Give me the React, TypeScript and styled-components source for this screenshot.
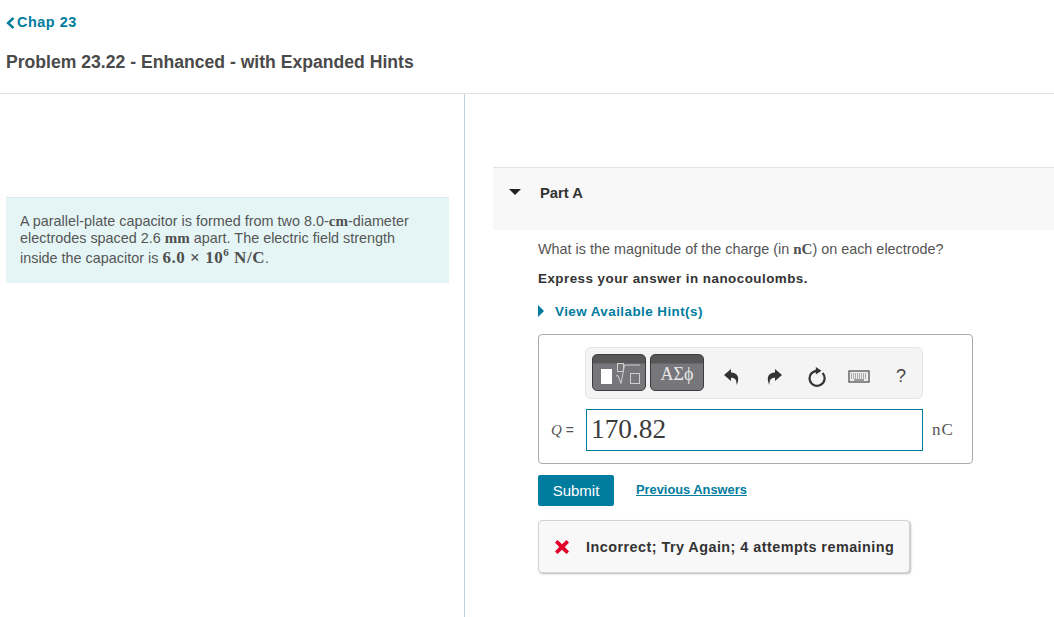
import React from 'react';
import styled, { createGlobalStyle } from 'styled-components';

const GlobalStyle = createGlobalStyle`
  html, body {
    margin: 0;
    padding: 0;
    background: #fff;
    height: 100%;
    overflow: hidden;
  }
  body {
    font-family: "Liberation Sans", Arial, sans-serif;
    color: #4a4a4a;
  }
`;

const Page = styled.div`
  width: 1054px;
  height: 617px;
  display: flex;
  flex-direction: column;
`;

const Header = styled.header`
  height: 94px;
  box-sizing: border-box;
  border-bottom: 1px solid #dfe3e6;
  padding: 14px 0 0 6px;
`;

const BackLink = styled.a`
  display: flex;
  align-items: center;
  gap: 2px;
  color: #007c9e;
  font-size: 14.4px;
  font-weight: 700;
  line-height: 17px;
  letter-spacing: 0.55px;
`;

const Title = styled.h1`
  margin: 20px 0 0;
  font-size: 17.6px;
  line-height: 22px;
  font-weight: 700;
  color: #4a4a4a;
`;

const Columns = styled.div`
  flex: 1;
  display: grid;
  grid-template-columns: 465px 1fr;
`;

const LeftColumn = styled.section`
  border-right: 1px solid #b9d3e4;
  padding: 103px 15px 0 6px;
`;

const ProblemBox = styled.div`
  background: #e5f5f6;
  border-top: 1px solid #dcebe8;
  padding: 15px 10px 0 14px;
  height: 70px;
  font-size: 14.4px;
  line-height: 17px;
  color: #555;
`;

const MathText = styled.span<{ $size?: number; $track?: number }>`
  font-family: "Liberation Serif", "Times New Roman", serif;
  font-weight: 700;
  font-size: ${p => p.$size ?? 15}px;
  letter-spacing: ${p => p.$track ?? 0}px;
  color: #4f4f4f;
`;

const LastLine = styled.div`
  line-height: 21px;
`;

const Sup = styled.sup`
  font-size: 11px;
  line-height: 0;
`;

const RightColumn = styled.section`
  padding: 73px 0 0 28px;
`;

const PartHeader = styled.div`
  height: 63px;
  box-sizing: border-box;
  background: #f8f8f8;
  border-top: 1px solid #e2e2e2;
  display: flex;
  align-items: flex-start;
  padding-top: 16px;
`;

const PartCaret = styled.span`
  width: 0;
  height: 0;
  margin: 5px 0 0 16px;
  border-left: 6px solid transparent;
  border-right: 6px solid transparent;
  border-top: 6px solid #222;
`;

const PartTitle = styled.span`
  margin-left: 19px;
  font-size: 14.8px;
  font-weight: 700;
  line-height: 18px;
  color: #333;
`;

const PartBody = styled.div`
  padding: 9px 0 0 45px;
  width: 440px;
`;

const Question = styled.p`
  margin: 0;
  font-size: 14.4px;
  line-height: 20px;
  color: #555;
`;

const Instruction = styled.p`
  margin: 10px 0 0;
  font-size: 13.4px;
  line-height: 20px;
  font-weight: 700;
  color: #333;
  letter-spacing: 0.47px;
`;

const HintRow = styled.div`
  display: flex;
  align-items: center;
  margin-top: 12px;
  height: 20px;
  font-size: 13.4px;
  font-weight: 700;
  color: #007c9e;
  letter-spacing: 0.45px;
`;

const HintCaret = styled.span`
  width: 0;
  height: 0;
  margin-right: 11px;
  border-top: 6px solid transparent;
  border-bottom: 6px solid transparent;
  border-left: 6px solid #007c9e;
`;

const AnswerCard = styled.div`
  margin-top: 13px;
  width: 435px;
  height: 130px;
  border: 1px solid #aaa;
  border-radius: 4px;
  display: flex;
  flex-direction: column;
  padding: 12px 0 0 12px;
  box-sizing: border-box;
`;

const Toolbar = styled.div`
  margin-left: 34px;
  width: 338px;
  height: 52px;
  box-sizing: border-box;
  background: #f4f4f4;
  border: 1px solid #e4e4e4;
  border-radius: 6px;
  display: flex;
  align-items: flex-start;
  padding: 6px 0 0 6px;
`;

const PaletteButton = styled.div`
  width: 54px;
  height: 37px;
  box-sizing: border-box;
  margin-right: 4px;
  border: 1px solid #3c3c3c;
  border-radius: 5px;
  background: linear-gradient(#585858 0 8px, #77777b 9px 100%);
  color: #e8e8e8;
  display: flex;
  align-items: center;
  justify-content: center;
  font-family: "Liberation Serif", serif;
  font-size: 18px;
  padding-top: 3px;
`;

const MatrixSvg = styled.svg`
  flex: none;
  margin-top: -3px;
`;

const ToolIcon = styled.span<{ $w: number }>`
  width: ${p => p.$w}px;
  height: 37px;
  padding-top: 8px;
  box-sizing: border-box;
  display: flex;
  justify-content: center;
  align-items: center;
  color: #333;
`;

const HelpMark = styled.span`
  font-size: 18px;
  color: #444;
`;

const InputRow = styled.div`
  display: flex;
  align-items: center;
  margin-top: 10px;
`;

const VarLabel = styled.span`
  width: 35px;
  font-size: 14px;
  color: #555;
  white-space: nowrap;
`;

const VarName = styled.i`
  font-family: "Liberation Serif", serif;
  font-size: 15px;
`;

const AnswerInput = styled.div`
  width: 337px;
  height: 42px;
  box-sizing: border-box;
  border: 1px solid #007c9e;
  padding-left: 4px;
  font-family: "Liberation Serif", serif;
  font-size: 27.3px;
  line-height: 38px;
  color: #3c3c3c;
`;

const UnitLabel = styled.span`
  margin-left: 9px;
  font-family: "Liberation Serif", serif;
  font-size: 17px;
  letter-spacing: 0.9px;
  color: #555;
`;

const ActionRow = styled.div`
  display: flex;
  align-items: flex-start;
  margin-top: 11px;
`;

const SubmitButton = styled.button`
  width: 76px;
  height: 31px;
  border: none;
  border-radius: 2px;
  background: #007c9e;
  color: #fff;
  font-family: inherit;
  font-size: 15px;
  padding: 0;
`;

const PreviousLink = styled.a`
  margin-left: 22px;
  margin-top: 7px;
  font-size: 12.85px;
  line-height: 16px;
  font-weight: 700;
  color: #007c9e;
  text-decoration: underline;
`;

const Feedback = styled.div`
  margin-top: 14px;
  width: 372px;
  height: 53px;
  box-sizing: border-box;
  background: #f8f8f8;
  border: 1px solid #d4d4d4;
  border-radius: 4px;
  box-shadow: 1px 1px 2px #bbb;
  display: flex;
  align-items: center;
  padding-left: 15px;
  font-size: 14.4px;
  font-weight: 700;
  color: #333;
  letter-spacing: 0.46px;
  white-space: nowrap;
`;

const FeedbackIcon = styled.svg`
  margin-right: 16px;
  flex: none;
`;

const MatrixIcon = () => (
  <MatrixSvg width="52" height="35" viewBox="0 0 52 35" fill="none">
    <rect x="8" y="14" width="11" height="15" fill="#fff" />
    <rect x="24.5" y="8.5" width="6" height="8" stroke="#cfcfcf" />
    <path d="M23 21l2-.5 3 8 3.5-18.500h15.500" stroke="#cfcfcf" />
    <rect x="37.5" y="18.5" width="9" height="10" stroke="#cfcfcf" />
  </MatrixSvg>
);

const arrowPath = 'M1 7 8 1v3.500c3.500 0 6.200 1.500 7 4.500.5 2.200 0 5.500-1.500 8 .2-2.500-.2-4.800-1.500-6-1-1-2.300-1.300-4-1.300V13z';

const UndoIcon = () => (
  <svg width="16" height="18" viewBox="0 0 16 18">
    <path d={arrowPath} fill="#333" />
  </svg>
);

const RedoIcon = () => (
  <svg width="16" height="18" viewBox="0 0 16 18">
    <g transform="matrix(-1 0 0 1 16 0)">
      <path d={arrowPath} fill="#333" />
    </g>
  </svg>
);

const ResetIcon = () => (
  <svg width="20" height="20" viewBox="0 0 20 20" fill="none">
    <path d="M10 3.800a7.500 7.500 0 1 0 5.500 2.300" stroke="#333" strokeWidth="2.200" />
    <path d="M8.800 0 14.500 3.800 8.800 7.500z" fill="#333" />
  </svg>
);

const KeyboardIcon = () => (
  <svg width="22" height="13" viewBox="0 0 22 13" fill="none">
    <rect x="1" y="1" width="20" height="11" fill="#eee" stroke="#555" strokeWidth="1.300" />
    <path d="M3 4h16M3 6h16M3 8h16" stroke="#666" strokeWidth="1" strokeDasharray="1 1" />
    <path d="M6 10h10" stroke="#666" strokeWidth="1.200" />
  </svg>
);

export default function App() {
  return (
    <Page>
      <GlobalStyle />
      <Header>
        <BackLink>
          <svg width="9" height="12" viewBox="0 0 9 12" fill="none">
            <path d="M7.5 1 2 6l5.500 5" stroke="#007c9e" strokeWidth="2.400" />
          </svg>
          Chap 23
        </BackLink>
        <Title>Problem 23.22 - Enhanced - with Expanded Hints</Title>
      </Header>
      <Columns>
        <LeftColumn>
          <ProblemBox>
            A parallel-plate capacitor is formed from two 8.0-<MathText>cm</MathText>-diameter
            <br />
            electrodes spaced 2.6 <MathText>mm</MathText> apart. The electric field strength
            <LastLine>
              inside the capacitor is <MathText $size={17} $track={0.55}>6.0 × 10<Sup>6</Sup> N/C</MathText>.
            </LastLine>
          </ProblemBox>
        </LeftColumn>
        <RightColumn>
          <PartHeader>
            <PartCaret />
            <PartTitle>Part A</PartTitle>
          </PartHeader>
          <PartBody>
            <Question>
              What is the magnitude of the charge (in <MathText>nC</MathText>) on each electrode?
            </Question>
            <Instruction>Express your answer in nanocoulombs.</Instruction>
            <HintRow>
              <HintCaret />
              View Available Hint(s)
            </HintRow>
            <AnswerCard>
              <Toolbar>
                <PaletteButton>
                  <MatrixIcon />
                </PaletteButton>
                <PaletteButton>ΑΣϕ</PaletteButton>
                <ToolIcon $w={46}><UndoIcon /></ToolIcon>
                <ToolIcon $w={42}><RedoIcon /></ToolIcon>
                <ToolIcon $w={42}><ResetIcon /></ToolIcon>
                <ToolIcon $w={42}><KeyboardIcon /></ToolIcon>
                <ToolIcon $w={42}><HelpMark>?</HelpMark></ToolIcon>
              </Toolbar>
              <InputRow>
                <VarLabel><VarName>Q</VarName> =</VarLabel>
                <AnswerInput>170.82</AnswerInput>
                <UnitLabel>nC</UnitLabel>
              </InputRow>
            </AnswerCard>
            <ActionRow>
              <SubmitButton>Submit</SubmitButton>
              <PreviousLink>Previous Answers</PreviousLink>
            </ActionRow>
            <Feedback>
              <FeedbackIcon width="16" height="14" viewBox="0 0 16 14">
                <path d="M1 2.500 3.500 0 8 4.200 12.500 0 15 2.500 10.800 7 15 11.500 12.500 14 8 9.800 3.500 14 1 11.500 5.200 7z" fill="#e2002b" />
              </FeedbackIcon>
              Incorrect; Try Again; 4 attempts remaining
            </Feedback>
          </PartBody>
        </RightColumn>
      </Columns>
    </Page>
  );
}
